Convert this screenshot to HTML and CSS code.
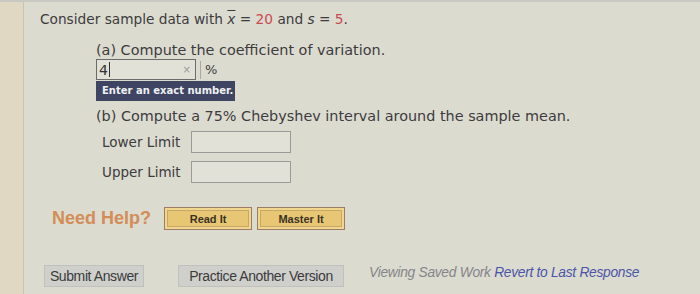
FILE: index.html
```html
<!DOCTYPE html>
<html>
<head>
<meta charset="utf-8">
<link rel="stylesheet" href="styles.css">
</head>
<body>
<div class="page">
  <div class="strip"></div>
  <div class="main">
    <p class="intro">Consider sample data with <span class="xbar">x</span> = <span class="red">20</span> and <i class="s">s</i> = <span class="red">5</span>.</p>
    <div class="part">
      <p class="q">(a) Compute the coefficient of variation.</p>
      <div class="ansrow">
        <div class="inbox active"><span class="val">4</span><span class="caret"></span><span class="clear">×</span></div>
        <span class="unit">%</span>
      </div>
      <div class="tip">Enter an exact number.</div>
      <p class="q qb">(b) Compute a 75% Chebyshev interval around the sample mean.</p>
      <div class="limits">
        <div class="limrow"><span class="lab">Lower Limit</span><div class="inbox"></div></div>
        <div class="limrow"><span class="lab">Upper Limit</span><div class="inbox"></div></div>
      </div>
    </div>
    <div class="help">
      <span class="need">Need Help?</span>
      <span class="gbtn">Read It</span>
      <span class="gbtn">Master It</span>
    </div>
    <div class="actions">
      <span class="sbtn sub">Submit Answer</span>
      <span class="sbtn pav">Practice Another Version</span>
      <span class="saved">Viewing Saved Work <span class="revert">Revert to Last Response</span></span>
    </div>
  </div>
</div>
</body>
</html>
```
FILE: styles.css
```css
html, body {
  margin: 0;
  padding: 0;
  width: 700px;
  height: 294px;
  overflow: hidden;
  background: #dcdbd0;
}
.page {
  display: flex;
  height: 294px;
  border-top: 2px solid #c9c9c4;
  box-sizing: border-box;
}
.strip {
  width: 23px;
  flex: none;
  background: #e0d8c2;
  border-right: 1px solid #c7c4b6;
}
.main {
  flex: 1;
  padding-left: 16px;
  font-family: "DejaVu Sans", Verdana, sans-serif;
  color: #3c3c3e;
}
p { margin: 0; }
.intro {
  font-size: 13.7px;
  margin-top: 8px;
  line-height: 18px;
  white-space: nowrap;
}
.xbar {
  text-decoration: overline;
  font-style: italic;
}
.s { font-style: italic; }
.red { color: #c94a4d; }
.part {
  padding-left: 56px;
}
.q {
  font-size: 14.4px;
  line-height: 18px;
  margin-top: 13px;
  white-space: nowrap;
}
.ansrow {
  display: flex;
  align-items: center;
  margin-top: 0;
}
.inbox {
  width: 99px;
  height: 20px;
  border: 1px solid #8d8d8a;
  box-sizing: border-box;
  background: #e2e1d7;
  display: flex;
  align-items: center;
}
.inbox.active {
  border-color: #6b6b69;
  width: 100px;
  height: 21px;
}
.val {
  font-size: 14px;
  margin-left: 2px;
  color: #333;
}
.caret {
  width: 1px;
  height: 15px;
  background: #333;
  margin-left: 1px;
}
.clear {
  margin-left: auto;
  margin-right: 4px;
  font-size: 10px;
  color: #9a9a98;
}
.unit {
  font-size: 13px;
  margin-left: 4px;
  padding-left: 4px;
  border-left: 1px solid #a8a8a4;
  line-height: 18px;
}
.tip {
  box-sizing: border-box;
  width: 139px;
  background: #3e4461;
  color: #eef0f4;
  font-size: 10px;
  font-weight: bold;
  padding-left: 6px;
  height: 20px;
  line-height: 20px;
  margin-top: 1px;
  white-space: nowrap;
  overflow: hidden;
}
.qb { margin-top: 6px; }
.limits {
  padding-left: 6px;
  display: flex;
  flex-direction: column;
  gap: 8px;
  margin-top: 6px;
}
.limrow {
  display: flex;
  align-items: center;
  gap: 5px;
}
.limrow .inbox {
  width: 100px;
  height: 22px;
  border-color: #9a9a96;
}
.lab {
  font-size: 13.5px;
  width: 84px;
}
.help {
  display: flex;
  align-items: center;
  margin-top: 24px;
  padding-left: 12px;
  font-family: "Liberation Sans", Arial, sans-serif;
}
.need {
  color: #d38d56;
  font-size: 18px;
  font-weight: bold;
  margin-right: 13px;
}
.gbtn {
  width: 88px;
  height: 23px;
  box-sizing: border-box;
  border: 1px solid #9c7c64;
  background: #e7c773;
  box-shadow: inset 0 0 0 2px #f0d68e, inset 0 0 0 3px #c8a868;
  font-size: 11px;
  font-weight: bold;
  color: #3a3225;
  display: flex;
  align-items: center;
  justify-content: center;
  margin-right: 5px;
}
.actions {
  display: flex;
  align-items: center;
  margin-top: 35px;
  padding-left: 4px;
  font-family: "Liberation Sans", Arial, sans-serif;
}
.sbtn {
  height: 22px;
  box-sizing: border-box;
  background: #cfcfcc;
  border: 1px solid #c0c0bc;
  color: #3b3b3b;
  font-size: 14px;
  display: flex;
  align-items: center;
  justify-content: center;
  letter-spacing: -0.4px;
  white-space: nowrap;
}
.sub { width: 100px; margin-right: 34px; }
.pav { width: 166px; margin-right: 25px; }
.saved {
  font-style: italic;
  color: #85858a;
  font-size: 13.8px;
  letter-spacing: -0.3px;
  margin-top: -8px;
  white-space: nowrap;
}
.revert { color: #4a55a8; }
```
